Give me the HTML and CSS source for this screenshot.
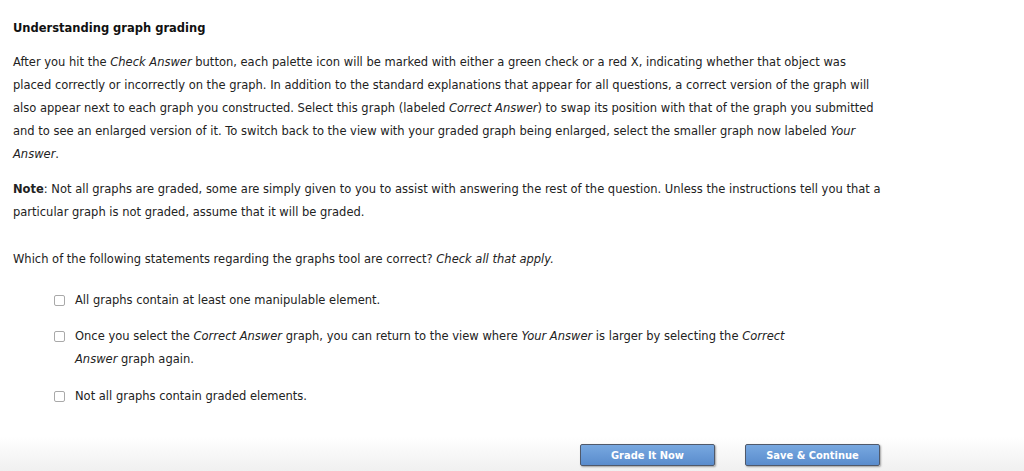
FILE: index.html
```html
<!DOCTYPE html>
<html>
<head>
<meta charset="utf-8">
<link rel="stylesheet" href="styles.css">
</head>
<body>
<div class="page">
  <main class="content">
    <h1 class="title">Understanding graph grading</h1>
    <p class="para">After you hit the <em>Check Answer</em> button, each palette icon will be marked with either a green check or a red X, indicating whether that object was placed correctly or incorrectly on the graph. In addition to the standard explanations that appear for all questions, a correct version of the graph will also appear next to each graph you constructed. Select this graph (labeled <em>Correct Answer</em>) to swap its position with that of the graph you submitted and to see an enlarged version of it. To switch back to the view with your graded graph being enlarged, select the smaller graph now labeled <em>Your Answer</em>.</p>
    <p class="para note"><strong>Note</strong>: Not all graphs are graded, some are simply given to you to assist with answering the rest of the question. Unless the instructions tell you that a particular graph is not graded, assume that it will be graded.</p>
    <p class="para question">Which of the following statements regarding the graphs tool are correct? <em>Check all that apply.</em></p>
    <ul class="options">
      <li class="option opt1"><span class="box"></span><span class="label">All graphs contain at least one manipulable element.</span></li>
      <li class="option opt2"><span class="box"></span><span class="label">Once you select the <em>Correct Answer</em> graph, you can return to the view where <em>Your Answer</em> is larger by selecting the <em>Correct Answer</em> graph again.</span></li>
      <li class="option opt3"><span class="box"></span><span class="label">Not all graphs contain graded elements.</span></li>
    </ul>
  </main>
  <footer class="footer">
    <button class="btn">Grade It Now</button>
    <button class="btn">Save &amp; Continue</button>
  </footer>
</div>
</body>
</html>
```
FILE: styles.css
```css
html, body {
  margin: 0;
  padding: 0;
  background: #fff;
}
body {
  font-family: "DejaVu Sans", Verdana, sans-serif;
  font-size: 11.5px;
  color: #222;
  width: 1024px;
  height: 471px;
  overflow: hidden;
}
.page {
  display: flex;
  flex-direction: column;
  height: 471px;
}
.content {
  padding: 17px 0 0 13px;
  width: 872px;
}
.title {
  font-size: 11.5px;
  font-weight: bold;
  line-height: 23px;
  margin: 0 0 11px;
  color: #111;
}
.para {
  margin: 0;
  line-height: 23px;
}
.note { margin-top: 12px; }
.question { margin-top: 24px; }
.options {
  list-style: none;
  margin: 18px 0 0;
  padding: 0 0 0 41px;
}
.option {
  display: flex;
  align-items: flex-start;
  line-height: 23px;
  width: 770px;
}
.opt2 { margin-top: 13px; }
.opt3 { margin-top: 14px; }
.box {
  flex: none;
  width: 9px;
  height: 9px;
  border: 1px solid #a9a9a9;
  border-radius: 2px;
  margin: 6px 10px 0 0;
  background: #fff;
}
.footer {
  flex: 1;
  display: flex;
  justify-content: flex-end;
  align-items: flex-end;
  gap: 30px;
  padding: 0 144px 5px 0;
  background: linear-gradient(#fff 0%, #fff 45%, #f0f0f0 100%);
}
.btn {
  width: 135px;
  height: 22px;
  border: 1px solid #50596a;
  border-radius: 2px;
  background: linear-gradient(#78a8e0, #5a8ccd);
  color: #fff;
  font-family: "DejaVu Sans Condensed", "DejaVu Sans", sans-serif;
  font-weight: bold;
  font-size: 11px;
  box-shadow: 1px 1px 2px rgba(0,0,0,0.35);
  padding: 0;
}
```
